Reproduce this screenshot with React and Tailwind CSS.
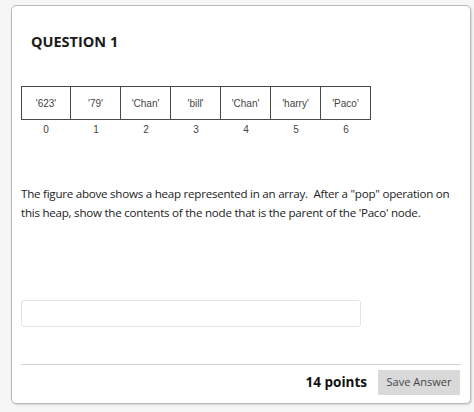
import React from "react";

const cells = ["'623'", "'79'", "'Chan'", "'bill'", "'Chan'", "'harry'", "'Paco'"];

export default function App() {
  return (
    <div className="w-[474px] h-[412px] bg-[#f6f6f6] pl-[11px] pr-[3px] pt-[5px] pb-[8px] font-['Open_Sans',sans-serif]">
      <div className="h-full bg-white border border-[#b9b9b9] rounded-[5px] shadow-[1px_1px_2px_rgba(0,0,0,0.15)] flex flex-col">
        <h1 className="text-[14.5px] font-bold text-[#1a1a1a] pl-[19px] pt-[26px] leading-[20px]">
          QUESTION 1
        </h1>

        {/* Array figure */}
        <div className="pl-[9px] mt-[34px] font-['Liberation_Sans',Arial,sans-serif]">
          <div className="flex">
            {cells.map((c, i) => (
              <div
                key={i}
                className={`w-[50px] h-[34px] border-y border-r border-[#4a4a4a] flex items-center justify-center text-[10px] text-[#444] ${
                  i === 0 ? "border-l" : ""
                }`}
              >
                {c}
              </div>
            ))}
          </div>
          <div className="flex">
            {cells.map((c, i) => (
              <div
                key={i}
                className="w-[50px] h-[18px] flex items-center justify-center text-[10px] text-[#444]"
              >
                {i}
              </div>
            ))}
          </div>
        </div>

        <p className="pl-[9px] pr-[10px] mt-[46px] text-[11.6px] tracking-[-0.25px] leading-[19px] text-[#222]">
          The figure above shows a heap represented in an array.&nbsp; After a "pop" operation on this heap, show the contents of the node that is the parent of the 'Paco' node.
        </p>

        <div className="shrink-0 ml-[9px] mt-[78px] w-[340px] h-[27px] border border-[#e3e3e3] rounded-[3px]"></div>

        <div className="mx-[9px] mt-[37px] border-t border-[#cfcfcf]"></div>

        <div className="flex items-center justify-end gap-[11px] pr-[10px] pt-[5px]">
          <span className="text-[13.5px] font-bold text-[#111]">14 points</span>
          <button className="w-[82px] h-[25px] bg-[#d9d9d9] text-[11px] text-[#444]">
            Save Answer
          </button>
        </div>
      </div>
    </div>
  );
}
